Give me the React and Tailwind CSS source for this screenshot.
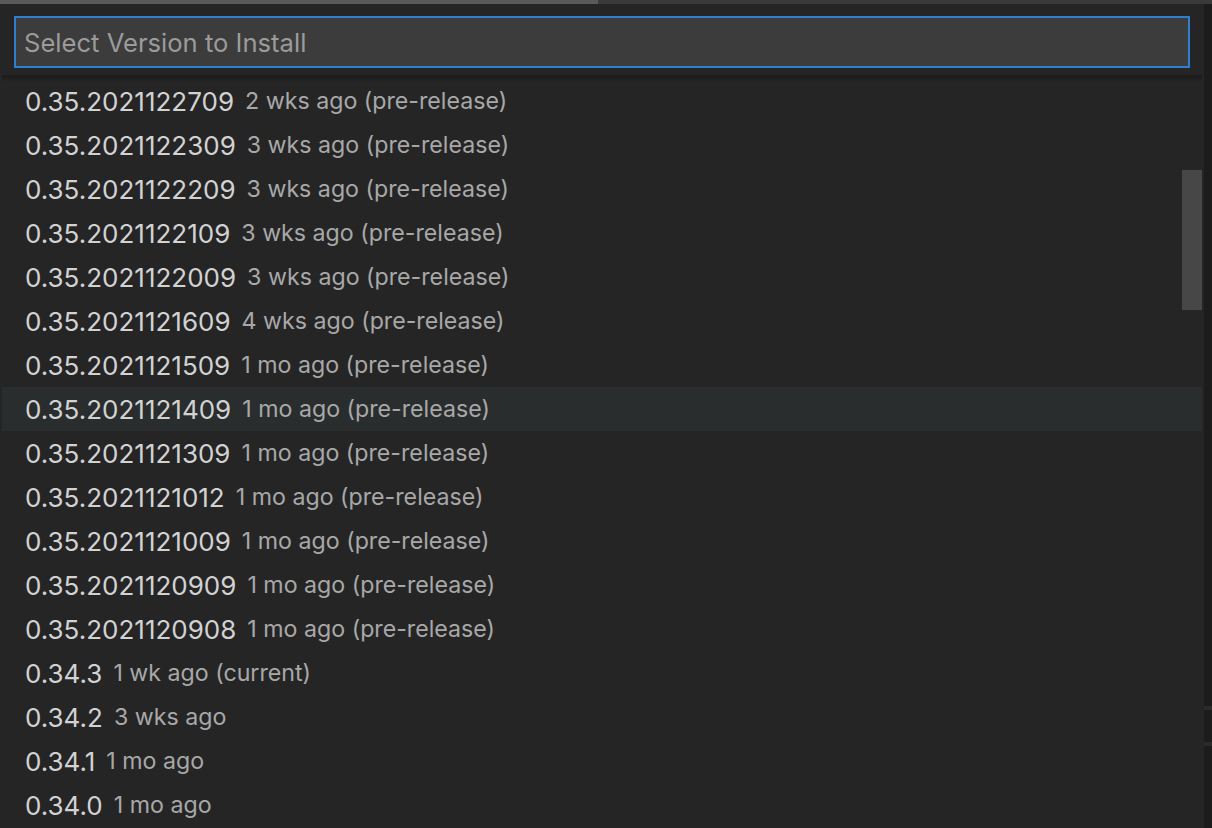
import React from "react";

const rows = [
  ["0.35.2021122709", "2 wks ago (pre-release)"],
  ["0.35.2021122309", "3 wks ago (pre-release)"],
  ["0.35.2021122209", "3 wks ago (pre-release)"],
  ["0.35.2021122109", "3 wks ago (pre-release)"],
  ["0.35.2021122009", "3 wks ago (pre-release)"],
  ["0.35.2021121609", "4 wks ago (pre-release)"],
  ["0.35.2021121509", "1 mo ago (pre-release)"],
  ["0.35.2021121409", "1 mo ago (pre-release)"],
  ["0.35.2021121309", "1 mo ago (pre-release)"],
  ["0.35.2021121012", "1 mo ago (pre-release)"],
  ["0.35.2021121009", "1 mo ago (pre-release)"],
  ["0.35.2021120909", "1 mo ago (pre-release)"],
  ["0.35.2021120908", "1 mo ago (pre-release)"],
  ["0.34.3", "1 wk ago (current)"],
  ["0.34.2", "3 wks ago"],
  ["0.34.1", "1 mo ago"],
  ["0.34.0", "1 mo ago"],
];

export default function App() {
  return (
    <div
      className="w-[1212px] h-[828px] bg-[#252526] flex flex-col overflow-hidden"
      style={{ fontFamily: "Inter, 'Noto Sans', sans-serif" }}
    >
      <div className="h-[4px] flex shrink-0">
        <div className="w-[598px] bg-[#5a5a5a]" />
        <div className="flex-1 bg-[#3a3a3a]" />
      </div>
      <div className="flex flex-1 min-h-0">
        <div className="flex-1 flex flex-col relative">
          <div className="pt-[12px] px-[14px]">
            <div className="h-[52px] border-2 border-[#2f7fd0] bg-[#3c3c3c] flex items-center px-[8px] pt-[2px]">
              <span className="text-[25.6px] leading-none text-[#9b9b9b]">
                Select Version to Install
              </span>
            </div>
          </div>
          <div className="relative mt-[11px] flex-1">
            <div className="absolute left-[2px] right-[2px] top-[-4px] h-[7px] bg-gradient-to-b from-[#1b1b1b] to-[#252526] z-10" />
            {rows.map(([v, d], i) => (
              <div
                key={v}
                className={`h-[44px] flex items-center pl-[23px] pt-[2px] mx-[2px] ${
                  i === 7 ? "bg-[#2a2d2e]" : ""
                }`}
              >
                <span className="text-[26px] leading-none text-[#d2d2d2]">{v}</span>
                <span className="ml-[11px] text-[23.2px] leading-none text-[#a8a8a8]">{d}</span>
              </div>
            ))}
            <div className="absolute left-[1182px] top-[91px] w-[20px] h-[140px] bg-[#474747]" />
          </div>
        </div>
        <div className="w-[8px] bg-[#1c1c1c] flex flex-col">
          <div className="h-[702px]" />
          <div className="h-[4px] bg-[#2a2a2a]" />
          <div className="h-[32px]" />
          <div className="h-[4px] bg-[#2a2a2a]" />
        </div>
      </div>
    </div>
  );
}
